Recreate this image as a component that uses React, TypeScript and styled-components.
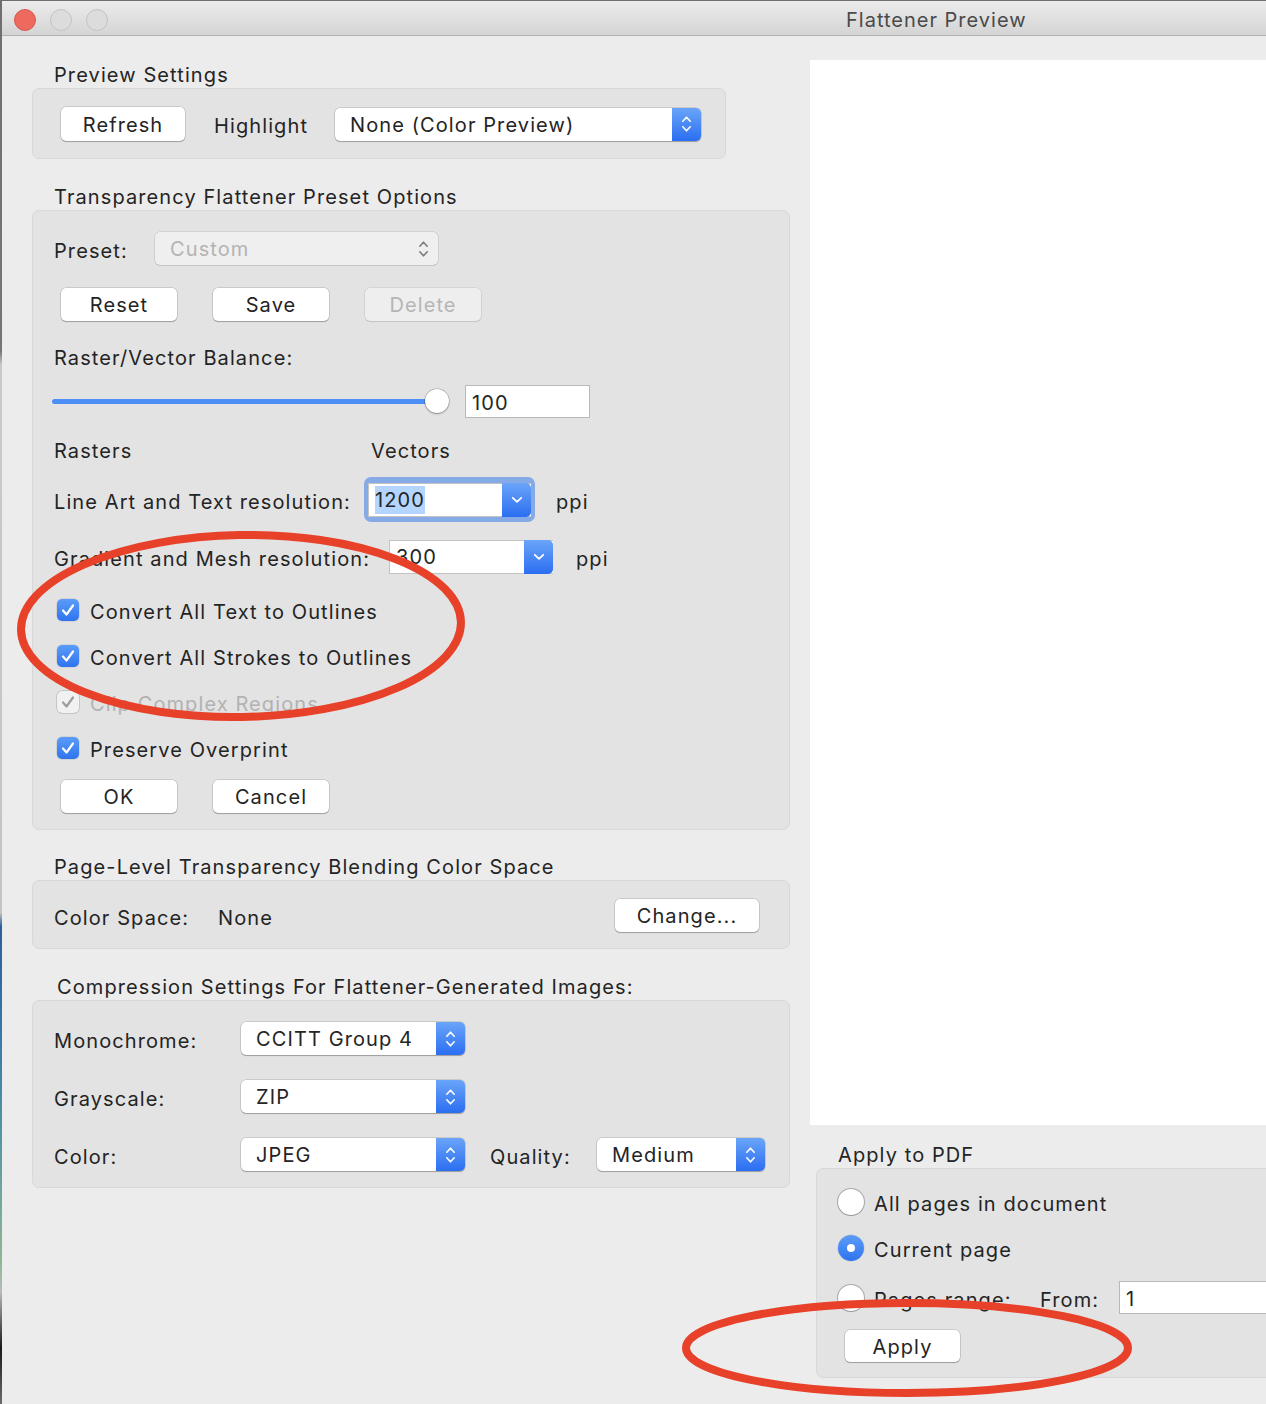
import styled, { createGlobalStyle, css } from "styled-components";

const GlobalStyle = createGlobalStyle`
  html, body {
    margin: 0;
    padding: 0;
    background: #ececec;
  }
  body {
    font-family: Inter, "Noto Sans", sans-serif;
    color: #242424;
    -webkit-font-smoothing: antialiased;
  }
  * {
    box-sizing: border-box;
  }
`;

// system text sits a little lower in its line than Inter does
const uiText = css`
  font-size: 20px;
  line-height: 24px;
  letter-spacing: 1.1px;
  white-space: nowrap;
  padding-top: 2px;
  margin-bottom: -2px;
`;

function Stepper({ muted }: { muted?: boolean }) {
  return (
    <svg width="11" height="20" viewBox="0 0 11 20">
      <path
        d="M1.8 7.2 L5.5 3.2 L9.2 7.2 M1.8 12.8 L5.5 16.8 L9.2 12.8"
        fill="none"
        stroke={muted ? "#7d7d7d" : "#fff"}
        strokeWidth="1.6"
        strokeLinecap="round"
        strokeLinejoin="round"
      />
    </svg>
  );
}

function Chevron() {
  return (
    <svg width="12" height="8" viewBox="0 0 12 8">
      <path
        d="M1.8 1.8 L6 5.8 L10.2 1.8"
        fill="none"
        stroke="#fff"
        strokeWidth="1.8"
        strokeLinecap="round"
        strokeLinejoin="round"
      />
    </svg>
  );
}

function Check({ color }: { color: string }) {
  return (
    <svg width="22" height="22" viewBox="0 0 22 22">
      <path
        d="M6 11.5 L9.5 15.5 L16 6.5"
        fill="none"
        stroke={color}
        strokeWidth="2.2"
        strokeLinecap="round"
        strokeLinejoin="round"
      />
    </svg>
  );
}

function PopUp({
  value,
  width,
  disabled,
}: {
  value: string;
  width: number;
  disabled?: boolean;
}) {
  return (
    <PopUpBox $width={width} $disabled={disabled}>
      <PopUpText>{value}</PopUpText>
      <StepperCap $disabled={disabled}>
        <Stepper muted={disabled} />
      </StepperCap>
    </PopUpBox>
  );
}

function CheckRow({
  label,
  disabled,
  top,
}: {
  label: string;
  disabled?: boolean;
  top: number;
}) {
  return (
    <Row $top={top} $indent={3}>
      <CheckBox $disabled={disabled}>
        <Check color={disabled ? "#9c9c9c" : "#fff"} />
      </CheckBox>
      <CheckLabel $disabled={disabled}>{label}</CheckLabel>
    </Row>
  );
}

export default function App() {
  return (
    <>
      <GlobalStyle />
      <Screen>
        <DesktopEdge />
        <Window>
          <TitleBar>
            <Lights>
              <Light $color="#ee6a5f" $border="#d5574c" />
              <Light $color="#dcdcdc" $border="#c3c3c3" />
              <Light $color="#dcdcdc" $border="#c3c3c3" />
            </Lights>
            <Title>Flattener Preview</Title>
          </TitleBar>

          <Body>
            <LeftColumn>
              <Heading $top={2}>Preview Settings</Heading>
              <GroupBox $width={694} $pad="18px 0 17px 28px">
                <Row>
                  <Button $width={124} $height={34}>
                    Refresh
                  </Button>
                  <Label $gap={29} $width={121}>
                    Highlight
                  </Label>
                  <PopUp value="None (Color Preview)" width={366} />
                </Row>
              </GroupBox>

              <Heading $top={25}>Transparency Flattener Preset Options</Heading>
              <GroupBox $pad="0 0 16px 21px">
                <Row $top={21}>
                  <Label $width={101}>Preset:</Label>
                  <PopUp value="Custom" width={283} disabled />
                </Row>
                <Row $top={23} $indent={7} $gap={36}>
                  <Button $width={116}>Reset</Button>
                  <Button $width={116}>Save</Button>
                  <Button $width={116} disabled>
                    Delete
                  </Button>
                </Row>
                <Row $top={23}>
                  <Label>Raster/Vector Balance:</Label>
                </Row>
                <Row $top={17} $indent={-2} $gap={16}>
                  <Slider>
                    <SliderTrack />
                    <SliderKnob />
                  </Slider>
                  <TextField $width={125}>100</TextField>
                </Row>
                <Row $top={19}>
                  <Label $width={317}>Rasters</Label>
                  <Label>Vectors</Label>
                </Row>
                <Row $top={16}>
                  <Label $width={310}>Line Art and Text resolution:</Label>
                  <FocusRing>
                    <Combo $width={163}>
                      <ComboText>
                        <Selected>1200</Selected>
                      </ComboText>
                      <ComboCap>
                        <Chevron />
                      </ComboCap>
                    </Combo>
                  </FocusRing>
                  <Label $gap={21}>ppi</Label>
                </Row>
                <Row $top={18}>
                  <Label $width={335}>Gradient and Mesh resolution:</Label>
                  <Combo $width={164}>
                    <ComboText>300</ComboText>
                    <ComboCap>
                      <Chevron />
                    </ComboCap>
                  </Combo>
                  <Label $gap={23}>ppi</Label>
                </Row>
                <CheckRow top={24} label="Convert All Text to Outlines" />
                <CheckRow top={22} label="Convert All Strokes to Outlines" />
                <CheckRow top={22} label="Clip Complex Regions" disabled />
                <CheckRow top={22} label="Preserve Overprint" />
                <Row $top={20} $indent={7} $gap={36}>
                  <Button $width={116}>OK</Button>
                  <Button $width={116}>Cancel</Button>
                </Row>
              </GroupBox>

              <Heading $top={24}>Page-Level Transparency Blending Color Space</Heading>
              <GroupBox $pad="18px 30px 16px 21px">
                <Row>
                  <Label $width={164}>Color Space:</Label>
                  <Label>None</Label>
                  <Button $width={144} $push>
                    Change...
                  </Button>
                </Row>
              </GroupBox>

              <Heading $top={25} $indent={25}>
                Compression Settings For Flattener-Generated Images:
              </Heading>
              <GroupBox $pad="21px 0 16px 21px">
                <Row>
                  <Label $width={187}>Monochrome:</Label>
                  <PopUp value="CCITT Group 4" width={224} />
                </Row>
                <Row $top={25}>
                  <Label $width={187}>Grayscale:</Label>
                  <PopUp value="ZIP" width={224} />
                </Row>
                <Row $top={25}>
                  <Label $width={187}>Color:</Label>
                  <PopUp value="JPEG" width={224} />
                  <Label $gap={25} $width={107}>
                    Quality:
                  </Label>
                  <PopUp value="Medium" width={168} />
                </Row>
              </GroupBox>
            </LeftColumn>

            <RightColumn>
              <PreviewPane />
              <Heading $top={17} $indent={28}>
                Apply to PDF
              </Heading>
              <GroupBox $pad="20px 0 15px 21px" $left={6}>
                <Row>
                  <Radio />
                  <RadioLabel>All pages in document</RadioLabel>
                </Row>
                <Row $top={20}>
                  <Radio $on />
                  <RadioLabel>Current page</RadioLabel>
                </Row>
                <Row $top={20}>
                  <Radio />
                  <RadioLabel $width={166}>Pages range:</RadioLabel>
                  <Label $width={79}>From:</Label>
                  <TextField $width={220}>1</TextField>
                </Row>
                <Row $top={16} $indent={7}>
                  <Button $width={115} $height={32}>
                    Apply
                  </Button>
                </Row>
              </GroupBox>
            </RightColumn>
          </Body>
        </Window>

        <Marks viewBox="0 0 1266 1404">
          <ellipse
            cx="241"
            cy="626"
            rx="220"
            ry="91"
            transform="rotate(-1 241 626)"
            fill="none"
            stroke="#e8412a"
            strokeWidth="8"
          />
          <ellipse
            cx="907"
            cy="1348"
            rx="221"
            ry="45"
            fill="none"
            stroke="#e8412a"
            strokeWidth="8"
          />
        </Marks>
      </Screen>
    </>
  );
}

const Screen = styled.div`
  position: relative;
  display: flex;
  width: 1266px;
  height: 1404px;
  overflow: hidden;
  background: #ececec;
`;

const DesktopEdge = styled.div`
  flex: 0 0 2px;
  background: linear-gradient(
    to bottom,
    #6f6f6f 0%,
    #767676 25%,
    #c9c9c9 26%,
    #c4c4c4 65%,
    #2d5e9c 66%,
    #3a7aa7 74%,
    #5b9aa0 82%,
    #8fb894 90%,
    #b9b9b9 92%,
    #1a1a1a 96%,
    #6b6b6b 100%
  );
`;

const Window = styled.div`
  display: flex;
  flex-direction: column;
  flex: 1;
  min-width: 0;
  border-top: 1px solid #6f6f6f;
  background: #ececec;
`;

const TitleBar = styled.div`
  display: flex;
  align-items: center;
  height: 35px;
  padding: 4px 0 0 12px;
  background: linear-gradient(to bottom, #ececec, #d4d4d4);
  border-bottom: 1px solid #b3b3b3;
`;

const Lights = styled.div`
  display: flex;
  gap: 14px;
`;

const Light = styled.span<{ $color: string; $border: string }>`
  width: 22px;
  height: 22px;
  border-radius: 50%;
  background: ${({ $color }) => $color};
  border: 1px solid ${({ $border }) => $border};
`;

const Title = styled.div`
  margin-left: 738px;
  font-size: 20px;
  letter-spacing: 1px;
  color: #4a4a4a;
  white-space: nowrap;
`;

const Body = styled.div`
  display: flex;
  gap: 20px;
  padding: 24px 0 0 30px;
`;

const LeftColumn = styled.div`
  display: flex;
  flex-direction: column;
  flex: 0 0 758px;
`;

const RightColumn = styled.div`
  display: flex;
  flex-direction: column;
  flex: 0 0 500px;
`;

const PreviewPane = styled.div`
  height: 1065px;
  background: #fff;
`;

const Heading = styled.div<{ $top?: number; $indent?: number }>`
  margin-top: ${({ $top }) => $top ?? 0}px;
  padding: 1px 0 1px ${({ $indent }) => $indent ?? 22}px;
  font-size: 20px;
  line-height: 24px;
  letter-spacing: 1.1px;
  white-space: nowrap;
`;

const GroupBox = styled.div<{ $width?: number; $pad: string; $left?: number }>`
  width: ${({ $width }) => ($width ? `${$width}px` : "auto")};
  margin-left: ${({ $left }) => $left ?? 0}px;
  padding: ${({ $pad }) => $pad};
  background: #e3e3e3;
  border: 1px solid #d8d8d8;
  border-radius: 7px;
`;

const Row = styled.div<{ $top?: number; $indent?: number; $gap?: number }>`
  display: flex;
  align-items: center;
  margin-top: ${({ $top }) => $top ?? 0}px;
  margin-left: ${({ $indent }) => $indent ?? 0}px;
  gap: ${({ $gap }) => $gap ?? 0}px;
`;

const Label = styled.span<{ $width?: number; $gap?: number }>`
  ${uiText};
  flex: 0 0 ${({ $width }) => ($width ? `${$width}px` : "auto")};
  margin-left: ${({ $gap }) => $gap ?? 0}px;
`;

const Button = styled.button<{ $width: number; $height?: number; $push?: boolean }>`
  flex: 0 0 ${({ $width }) => $width}px;
  height: ${({ $height }) => $height ?? 33}px;
  margin-left: ${({ $push }) => ($push ? "auto" : "0")};
  padding: 1px 0 0;
  font-family: Inter, "Noto Sans", sans-serif;
  font-size: 20px;
  letter-spacing: 1.1px;
  color: #242424;
  background: #fff;
  border: none;
  border-radius: 5px;
  box-shadow: 0 0 0 0.5px rgba(0, 0, 0, 0.22), 0 1px 1px rgba(0, 0, 0, 0.22);

  &:disabled {
    color: #b6b6b6;
    background: #eeeeee;
    box-shadow: 0 0 0 0.5px rgba(0, 0, 0, 0.12), 0 1px 1px rgba(0, 0, 0, 0.08);
  }
`;

const PopUpBox = styled.div<{ $width: number; $disabled?: boolean }>`
  display: flex;
  flex: 0 0 ${({ $width }) => $width}px;
  height: 33px;
  border-radius: 5px;
  background: ${({ $disabled }) => ($disabled ? "#efefef" : "#fff")};
  color: ${({ $disabled }) => ($disabled ? "#b3b3b3" : "#242424")};
  box-shadow: ${({ $disabled }) =>
    $disabled
      ? "0 0 0 0.5px rgba(0,0,0,0.16), 0 1px 1px rgba(0,0,0,0.06)"
      : "0 0 0 0.5px rgba(0,0,0,0.22), 0 1px 1px rgba(0,0,0,0.22)"};
`;

const PopUpText = styled.span`
  flex: 1;
  padding: 1px 0 0 15px;
  font-size: 20px;
  line-height: 32px;
  letter-spacing: 1.1px;
  white-space: nowrap;
  overflow: hidden;
`;

const StepperCap = styled.span<{ $disabled?: boolean }>`
  display: flex;
  align-items: center;
  justify-content: center;
  flex: 0 0 29px;
  border-radius: 0 5px 5px 0;
  background: ${({ $disabled }) =>
    $disabled ? "transparent" : "linear-gradient(to bottom, #6aa5f9, #2b6ef1)"};
`;

const Slider = styled.div`
  position: relative;
  display: flex;
  align-items: center;
  flex: 0 0 397px;
  height: 33px;
`;

const SliderTrack = styled.div`
  width: 385px;
  height: 5px;
  border-radius: 3px;
  background: #4d8ef7;
`;

const SliderKnob = styled.span`
  position: absolute;
  right: 0;
  top: 4px;
  width: 24px;
  height: 24px;
  border-radius: 50%;
  background: #fff;
  box-shadow: 0 0 0 0.5px rgba(0, 0, 0, 0.3), 0 1px 2px rgba(0, 0, 0, 0.3);
`;

const TextField = styled.div<{ $width: number }>`
  flex: 0 0 ${({ $width }) => $width}px;
  height: 33px;
  padding: 2px 0 0 6px;
  font-size: 20px;
  line-height: 30px;
  letter-spacing: 1.1px;
  background: #fff;
  border: 1px solid #b9b9b9;
`;

const FocusRing = styled.div`
  display: flex;
  align-items: center;
  justify-content: center;
  flex: 0 0 171px;
  height: 45px;
  border-radius: 7px;
  background: #86aae6;
`;

const Combo = styled.div<{ $width: number }>`
  display: flex;
  flex: 0 0 ${({ $width }) => $width}px;
  height: 34px;
  background: #fff;
  border: 1px solid #c3c3c3;
  border-right: none;
`;

const ComboText = styled.span`
  flex: 1;
  padding: 2px 0 0 6px;
  font-size: 20px;
  line-height: 28px;
  letter-spacing: 1.1px;
`;

const Selected = styled.span`
  padding: 2px 0;
  background: #b4d5fe;
`;

const ComboCap = styled.span`
  display: flex;
  align-items: center;
  justify-content: center;
  flex: 0 0 29px;
  margin: -1px 0;
  border-radius: 0 5px 5px 0;
  background: linear-gradient(to bottom, #6aa5f9, #2b6ef1);
`;

const CheckBox = styled.span<{ $disabled?: boolean }>`
  display: flex;
  flex: 0 0 22px;
  height: 22px;
  border-radius: 5px;
  background: ${({ $disabled }) =>
    $disabled ? "#f1f1f1" : "linear-gradient(to bottom, #5b9cf8, #2f74f0)"};
  box-shadow: ${({ $disabled }) =>
    $disabled ? "0 0 0 0.5px rgba(0,0,0,0.25)" : "0 0 0 0.5px rgba(0,0,0,0.15)"};
`;

const CheckLabel = styled.span<{ $disabled?: boolean }>`
  ${uiText};
  margin-left: 11px;
  color: ${({ $disabled }) => ($disabled ? "#b2b2b2" : "#242424")};
`;

const Radio = styled.span<{ $on?: boolean }>`
  display: flex;
  align-items: center;
  justify-content: center;
  flex: 0 0 26px;
  height: 26px;
  border-radius: 50%;
  background: ${({ $on }) => ($on ? "linear-gradient(to bottom, #5b9cf8, #2f74f0)" : "#fff")};
  box-shadow: ${({ $on }) =>
    $on ? "0 0 0 0.5px rgba(0,0,0,0.15)" : "0 0 0 1px rgba(0,0,0,0.25), 0 1px 1px rgba(0,0,0,0.1)"};

  &::after {
    content: "";
    display: ${({ $on }) => ($on ? "block" : "none")};
    width: 8px;
    height: 8px;
    border-radius: 50%;
    background: #fff;
  }
`;

const RadioLabel = styled.span<{ $width?: number }>`
  ${uiText};
  flex: 0 0 ${({ $width }) => ($width ? `${$width}px` : "auto")};
  margin-left: 10px;
`;

const Marks = styled.svg`
  position: absolute;
  inset: 0;
  width: 1266px;
  height: 1404px;
  pointer-events: none;
`;
